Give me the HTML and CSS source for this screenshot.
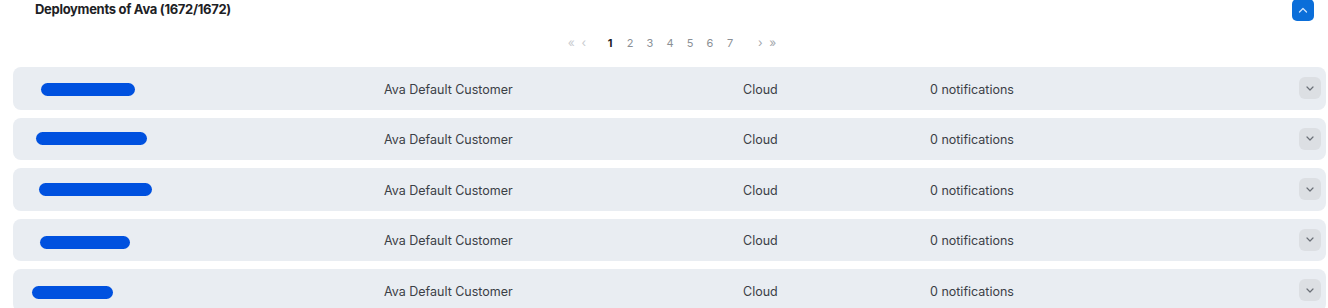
FILE: index.html
```html
<!DOCTYPE html>
<html>
<head>
<meta charset="utf-8">
<link rel="stylesheet" href="styles.css">
</head>
<body>
<div class="panel">
  <div class="header">
    <h2 class="title">Deployments of Ava (1672/1672)</h2>
    <button class="collapse-btn" aria-label="Collapse">
      <svg width="10" height="6" viewBox="0 0 10 6"><path d="M1.5 5L5 1.5L8.5 5" fill="none" stroke="#cfe3fb" stroke-width="1.3" stroke-linecap="round" stroke-linejoin="round"/></svg>
    </button>
  </div>
  <nav class="pager">
    <span class="pg-arrows">«&nbsp;&nbsp;‹</span>
    <span class="pg-num active">1</span>
    <span class="pg-num">2</span>
    <span class="pg-num">3</span>
    <span class="pg-num">4</span>
    <span class="pg-num">5</span>
    <span class="pg-num">6</span>
    <span class="pg-num">7</span>
    <span class="pg-arrows next">›&nbsp;&nbsp;»</span>
  </nav>
  <div class="rows">
    <div class="row">
      <div class="name"><span class="redact" style="width:94px;margin-left:9px;margin-top:3px"></span></div>
      <div class="cell">Ava Default Customer</div>
      <div class="cell">Cloud</div>
      <div class="cell">0 notifications</div>
      <button class="expand-btn" aria-label="Expand"><svg width="8" height="5" viewBox="0 0 8 5"><path d="M1 1L4 4L7 1" fill="none" stroke="#6b7077" stroke-width="1.2" stroke-linecap="round" stroke-linejoin="round"/></svg></button>
    </div>
    <div class="row">
      <div class="name"><span class="redact" style="width:111px;margin-left:4px;margin-top:0px"></span></div>
      <div class="cell">Ava Default Customer</div>
      <div class="cell">Cloud</div>
      <div class="cell">0 notifications</div>
      <button class="expand-btn" aria-label="Expand"><svg width="8" height="5" viewBox="0 0 8 5"><path d="M1 1L4 4L7 1" fill="none" stroke="#6b7077" stroke-width="1.2" stroke-linecap="round" stroke-linejoin="round"/></svg></button>
    </div>
    <div class="row">
      <div class="name"><span class="redact" style="width:113px;margin-left:7px;margin-top:1px"></span></div>
      <div class="cell">Ava Default Customer</div>
      <div class="cell">Cloud</div>
      <div class="cell">0 notifications</div>
      <button class="expand-btn" aria-label="Expand"><svg width="8" height="5" viewBox="0 0 8 5"><path d="M1 1L4 4L7 1" fill="none" stroke="#6b7077" stroke-width="1.2" stroke-linecap="round" stroke-linejoin="round"/></svg></button>
    </div>
    <div class="row">
      <div class="name"><span class="redact" style="width:90px;margin-left:8px;margin-top:6px"></span></div>
      <div class="cell">Ava Default Customer</div>
      <div class="cell">Cloud</div>
      <div class="cell">0 notifications</div>
      <button class="expand-btn" aria-label="Expand"><svg width="8" height="5" viewBox="0 0 8 5"><path d="M1 1L4 4L7 1" fill="none" stroke="#6b7077" stroke-width="1.2" stroke-linecap="round" stroke-linejoin="round"/></svg></button>
    </div>
    <div class="row">
      <div class="name"><span class="redact" style="width:81px;margin-left:0px;margin-top:5px"></span></div>
      <div class="cell">Ava Default Customer</div>
      <div class="cell">Cloud</div>
      <div class="cell">0 notifications</div>
      <button class="expand-btn" aria-label="Expand"><svg width="8" height="5" viewBox="0 0 8 5"><path d="M1 1L4 4L7 1" fill="none" stroke="#6b7077" stroke-width="1.2" stroke-linecap="round" stroke-linejoin="round"/></svg></button>
    </div>
  </div>
</div>
</body>
</html>
```

FILE: styles.css
```css
* { box-sizing: border-box; }
html, body { margin: 0; padding: 0; background: #ffffff; }
body {
  font-family: Inter, "Noto Sans", "Liberation Sans", sans-serif;
  color: #3b4046;
  overflow: hidden;
}
.panel {
  padding: 0 2px 0 13px;
}
.header {
  display: flex;
  align-items: center;
  justify-content: space-between;
  height: 21px;
  padding-left: 22px;
  padding-right: 12px;
}
.title {
  margin: 0;
  font-size: 13px;
  font-weight: 700;
  color: #1d2125;
  letter-spacing: -0.3px;
  transform: translateY(-2px);
}
.collapse-btn {
  width: 22px;
  height: 22px;
  border: none;
  border-radius: 5px;
  background: #0b6ed9;
  display: flex;
  align-items: center;
  justify-content: center;
  padding: 0;
  margin-top: -1px;
}
.pager {
  display: flex;
  align-items: center;
  justify-content: center;
  height: 46px;
  padding-bottom: 3px;
  padding-left: 5px;
  font-size: 11px;
  color: #8a8f95;
}
.pg-arrows {
  color: #c9ccd0;
  margin-right: 14px;
  font-size: 12px;
}
.pg-arrows.next {
  margin-left: 18px;
  margin-right: 0;
  color: #a4a8ad;
}
.pg-num {
  width: 20px;
  text-align: center;
}
.pg-num.active {
  color: #1d2125;
  font-weight: 700;
}
.rows {
  display: flex;
  flex-direction: column;
  gap: 8px;
}
.row {
  height: 42.5px;
  flex: none;
  background: #e9edf2;
  border-radius: 8px;
  display: grid;
  grid-template-columns: 352px 359px 187px 1fr 22px;
  align-items: center;
  padding-left: 19px;
  padding-right: 5px;
  padding-top: 2px;
  font-size: 12.5px;
  color: #3b4046;
}
.name {
  display: flex;
  align-items: center;
}
.redact {
  display: block;
  height: 13px;
  border-radius: 7px;
  background: #0051df;
  transform: translateY(-1px);
}
.cell {
  white-space: nowrap;
}
.expand-btn {
  width: 22px;
  height: 22px;
  border: none;
  border-radius: 6px;
  background: #dcdfe3;
  padding: 0;
  display: flex;
  align-items: center;
  justify-content: center;
  transform: translateY(-1px);
}
```
